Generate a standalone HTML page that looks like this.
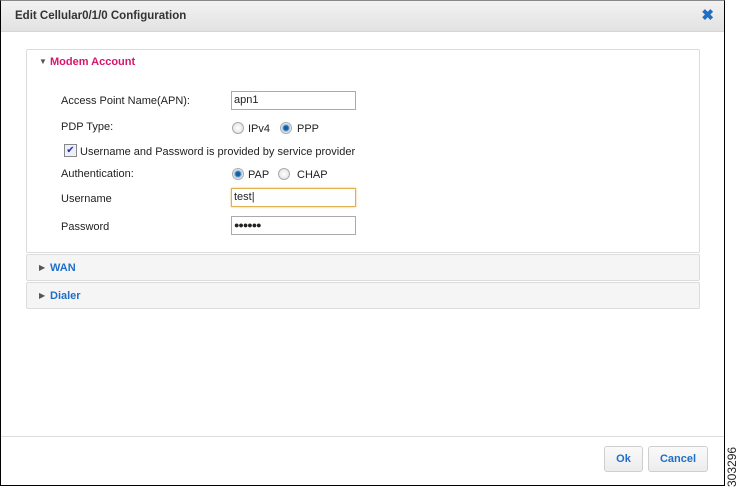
<!DOCTYPE html><html><head><style>
body{margin:0;width:740px;height:486px;background:#fff;font-family:"Liberation Sans",sans-serif;font-size:11px;color:#222;position:relative;overflow:hidden}
.dlg{position:absolute;left:0;top:0;width:723px;height:484px;border:1px solid #000;border-top-color:#888}
.hdr{position:absolute;left:0;top:0;right:0;height:30px;background:linear-gradient(#f2f2f2,#e2e2e2);border-bottom:1px solid #d6d6d6;font-weight:bold;font-size:11.5px;color:#333;line-height:30px;padding-left:14px}
.x{position:absolute;right:10px;top:0;color:#1e6fc8;font-size:15px;font-weight:bold}
.panel{position:absolute;left:25px;width:672px;border:1px solid #dcdcdc;border-radius:2px}
.tri{position:absolute;left:12px;font-size:8px;color:#555}
.t{position:absolute;font-weight:bold}
.lab{position:absolute;left:34px}
.inp{position:absolute;left:204px;width:121px;height:17px;border:1px solid #aaa;font-size:11px;line-height:17px;padding-left:2px}
.rad{position:absolute;width:10px;height:10px;border-radius:50%;border:1px solid #aaa;background:radial-gradient(#fff,#ddd)}
.rad.on{background:radial-gradient(#1a5e9c 30%,#7fb3e0 45%,#fff 70%)}
.btn{position:absolute;top:445px;height:24px;border:1px solid #cfcfcf;border-radius:3px;background:linear-gradient(#fafafa,#ececec);color:#1e6fc8;font-weight:bold;line-height:24px;text-align:center}
</style></head><body>
<div class="dlg">
<div class="hdr">Edit Cellular0/1/0 Configuration<span class="x">✖</span></div>
<div class="panel" style="top:48px;height:202px">
 <span class="tri" style="top:7px">▼</span><span class="t" style="left:23px;top:6px;color:#d6166e">Modem Account</span>
 <span class="lab" style="top:45px">Access Point Name(APN):</span><div class="inp" style="top:41px">apn1</div>
 <span class="lab" style="top:71px">PDP Type:</span>
 <div class="rad" style="left:205px;top:72px"></div><span style="position:absolute;left:221px;top:73px">IPv4</span>
 <div class="rad on" style="left:253px;top:72px"></div><span style="position:absolute;left:270px;top:73px">PPP</span>
 <div style="position:absolute;left:37px;top:94px;width:11px;height:11px;border:1px solid #888;background:#eef;font-size:10px;line-height:11px;color:#23a;text-align:center">✔</div>
 <span style="position:absolute;left:53px;top:96px">Username and Password is provided by service provider</span>
 <span class="lab" style="top:118px">Authentication:</span>
 <div class="rad on" style="left:205px;top:118px"></div><span style="position:absolute;left:221px;top:119px">PAP</span>
 <div class="rad" style="left:251px;top:118px"></div><span style="position:absolute;left:270px;top:119px">CHAP</span>
 <span class="lab" style="top:143px">Username</span><div class="inp" style="top:138px;border-color:#e0b050;box-shadow:0 0 2px #f0c060">test|</div>
 <span class="lab" style="top:171px">Password</span><div class="inp" style="top:166px;font-size:9px;letter-spacing:-1px">●●●●●●</div>
</div>
<div class="panel" style="top:253px;height:25px;background:#f5f5f5"><span class="tri" style="top:8px">▶</span><span class="t" style="left:23px;top:7px;color:#1e6fc8">WAN</span></div>
<div class="panel" style="top:281px;height:25px;background:#f5f5f5"><span class="tri" style="top:8px">▶</span><span class="t" style="left:23px;top:7px;color:#1e6fc8">Dialer</span></div>
<div style="position:absolute;left:0;right:0;top:435px;border-top:1px solid #ddd"></div>
<div class="btn" style="left:603px;width:37px">Ok</div>
<div class="btn" style="left:647px;width:58px">Cancel</div>
</div>
<div style="position:absolute;left:724px;top:440px;width:16px;height:46px;"><span style="position:absolute;left:-16px;top:16px;transform:rotate(-90deg);font-size:12px;width:48px">303296</span></div>
</body></html>
